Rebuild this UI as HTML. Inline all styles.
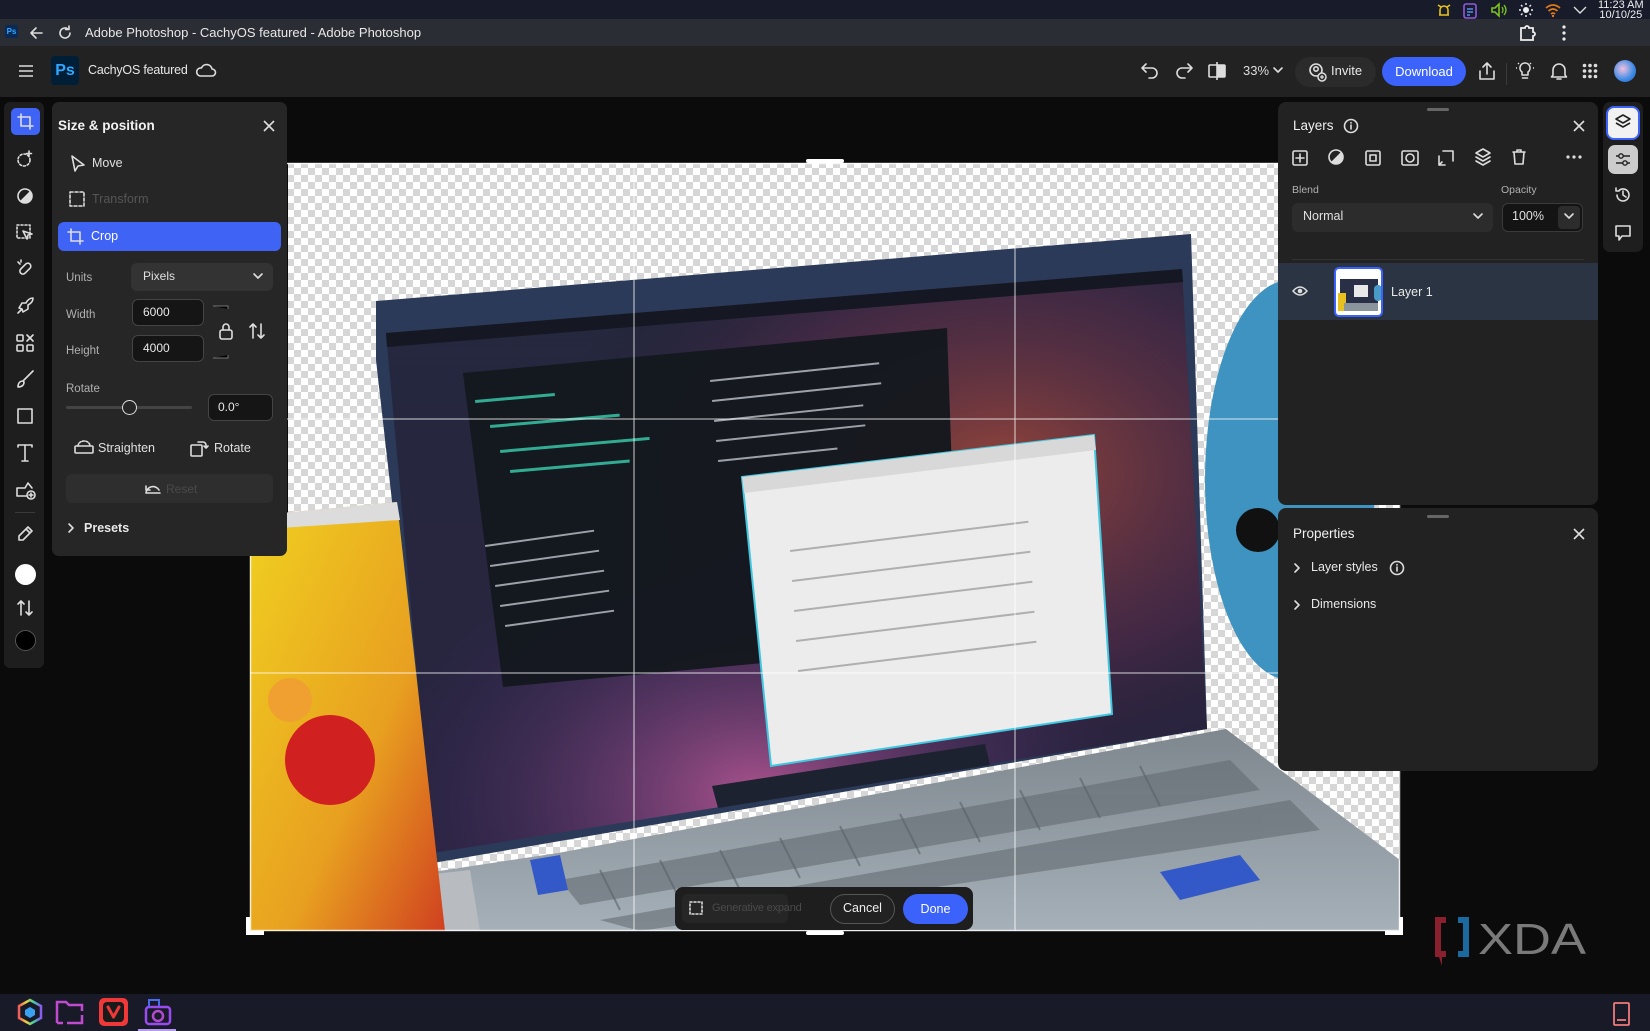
<!DOCTYPE html>
<html><head><meta charset="utf-8">
<style>
*{box-sizing:border-box;margin:0;padding:0}
body{width:1650px;height:1031px;overflow:hidden;background:#0b0b0b;font-family:"Liberation Sans",sans-serif;color:#e8e8e8;position:relative}
.a{position:absolute}
.t{position:absolute;white-space:nowrap}
svg{position:absolute;overflow:visible}
.ic{fill:none;stroke:#ddd;stroke-width:1.6;stroke-linecap:round;stroke-linejoin:round}
.lbl{font-size:11.5px;color:#b0b0b0}
</style></head><body>

<!-- OS bar -->
<div class="a" style="left:0;top:0;width:1650px;height:19px;background:#181b2a"></div>
<svg style="left:1436px;top:2px" width="16" height="16"><path d="M3 13h10M4 13V8a4 4 0 0 1 8 0v5M2 3l3 2M14 3l-3 2" stroke="#e6c21a" stroke-width="1.6" fill="none"/></svg>
<svg style="left:1462px;top:1px" width="16" height="18"><rect x="2" y="3" width="12" height="14" rx="2" stroke="#8f5ae0" stroke-width="1.6" fill="none"/><path d="M5 8h6M5 11h6M5 14h3" stroke="#5a8ef0" stroke-width="1.4"/></svg>
<svg style="left:1490px;top:2px" width="18" height="16"><path d="M2 6h3l4-4v12l-4-4H2z" stroke="#7cc31a" stroke-width="1.6" fill="none"/><path d="M12 5q2 3 0 6M14 3q4 5 0 10" stroke="#7cc31a" stroke-width="1.3" fill="none"/></svg>
<svg style="left:1518px;top:2px" width="16" height="16"><circle cx="8" cy="8" r="3" fill="#eee"/><path d="M8 1v2M8 13v2M1 8h2M13 8h2M3 3l1.5 1.5M11.5 11.5L13 13M3 13l1.5-1.5M11.5 4.5L13 3" stroke="#eee" stroke-width="1.4"/></svg>
<svg style="left:1544px;top:2px" width="18" height="16"><path d="M2 6q7-6 14 0M4.5 9q4.5-4 9 0M7 12q2-2 4 0" stroke="#e07a1c" stroke-width="1.7" fill="none"/><circle cx="9" cy="14" r="1.2" fill="#e07a1c"/></svg>
<svg style="left:1572px;top:4px" width="16" height="12"><path d="M2 3l6 6 6-6" stroke="#ddd" stroke-width="1.4" fill="none"/></svg>
<div class="t" style="left:1598px;top:0px;font-size:11px;line-height:10px;color:#eee;text-align:center">11:23 AM<br>10/10/25</div>

<!-- Browser bar -->
<div class="a" style="left:0;top:19px;width:1650px;height:27px;background:#2a2d33"></div>
<div class="a" style="left:5px;top:25px;width:13px;height:13px;background:#0a2a56;border-radius:2px;color:#31a8ff;font-size:8px;font-weight:bold;text-align:center;line-height:13px">Ps</div>
<svg style="left:29px;top:25px" width="16" height="16"><path d="M13 8H3M7 3L2 8l5 5" class="ic" stroke="#eee"/></svg>
<svg style="left:57px;top:25px" width="16" height="16"><path d="M13 8a5 5 0 1 1-2-4M12 1v3.5H8.5" class="ic" stroke="#eee"/></svg>
<div class="t" style="left:85px;top:25px;font-size:13px;color:#e8e8e8">Adobe Photoshop - CachyOS featured - Adobe Photoshop</div>
<svg style="left:1518px;top:24px" width="18" height="18"><path d="M3 4h4a2 2 0 0 1 4 0h4v4a2 2 0 0 1 0 4v4H3z" stroke="#eee" stroke-width="1.8" fill="none"/></svg>
<svg style="left:1560px;top:24px" width="8" height="18"><circle cx="4" cy="3" r="1.6" fill="#eee"/><circle cx="4" cy="9" r="1.6" fill="#eee"/><circle cx="4" cy="15" r="1.6" fill="#eee"/></svg>

<!-- App header -->
<div class="a" style="left:0;top:46px;width:1650px;height:51px;background:#222222"></div>
<svg style="left:18px;top:64px" width="16" height="14"><path d="M1 2h14M1 7h14M1 12h14" stroke="#ddd" stroke-width="1.6"/></svg>
<div class="a" style="left:51px;top:56px;width:28px;height:29px;background:#001e36;border-radius:4px;color:#31a8ff;font-size:16px;font-weight:bold;text-align:center;line-height:29px">Ps</div>
<div class="t" style="left:88px;top:63px;font-size:12.5px;color:#e8e8e8;letter-spacing:-0.2px">CachyOS featured</div>
<svg style="left:195px;top:62px" width="22" height="16"><path d="M5 14h12a3.5 3.5 0 0 0 0-7 5.5 5.5 0 0 0-10.5-1A4 4 0 0 0 5 14z" class="ic" stroke="#eee"/></svg>

<svg style="left:1140px;top:61px" width="20" height="18"><path d="M6 3L2 7l4 4M2 7h10a5 5 0 0 1 0 10H9" class="ic" stroke="#666"/></svg>
<svg style="left:1174px;top:61px" width="20" height="18"><path d="M14 3l4 4-4 4M18 7H8a5 5 0 0 0 0 10h3" class="ic" stroke="#666"/></svg>
<svg style="left:1207px;top:61px" width="20" height="20"><rect x="2" y="4" width="16" height="12" rx="1" class="ic" stroke="#ddd"/><path d="M10 1v18" stroke="#ddd" stroke-width="1.6"/><rect x="10" y="4" width="8" height="12" fill="#ddd"/></svg>
<div class="t" style="left:1243px;top:63px;font-size:13px;color:#ddd">33%</div>
<svg style="left:1272px;top:66px" width="12" height="10"><path d="M2 2l4 4 4-4" class="ic" stroke="#ddd"/></svg>
<div class="a" style="left:1295px;top:57px;width:81px;height:30px;background:#2b2b2b;border-radius:15px"></div>
<svg style="left:1307px;top:62px" width="22" height="22"><circle cx="9" cy="8" r="6" class="ic" stroke="#ddd"/><circle cx="9" cy="7" r="2.2" class="ic" stroke="#ddd"/><circle cx="15" cy="15" r="4" fill="#2b2b2b" stroke="#ddd" stroke-width="1.5"/><path d="M15 13v4M13 15h4" stroke="#ddd" stroke-width="1.3"/></svg>
<div class="t" style="left:1331px;top:63px;font-size:13px;color:#e8e8e8">Invite</div>
<div class="a" style="left:1382px;top:57px;width:84px;height:29px;background:#3b63fb;border-radius:15px;color:#fff;font-size:13px;text-align:center;line-height:29px">Download</div>
<svg style="left:1477px;top:61px" width="20" height="20"><path d="M10 13V2M6 6l4-4 4 4M3 10v8h14v-8" class="ic" stroke="#ddd"/></svg>
<div class="a" style="left:1506px;top:63px;width:1px;height:22px;background:#3a3a3a"></div>
<svg style="left:1515px;top:60px" width="20" height="22"><path d="M7 15h6M7.5 18h5M10 3a5 5 0 0 0-3 9v3h6v-3a5 5 0 0 0-3-9z" class="ic" stroke="#ddd"/><path d="M1 8h1M18 8h1M3 3l1 1M16 3l-1 1" stroke="#ddd" stroke-width="1.4"/></svg>
<svg style="left:1549px;top:61px" width="20" height="20"><path d="M4 14V9a6 6 0 0 1 12 0v5l1.5 2h-15zM8 18h4" class="ic" stroke="#ddd"/></svg>
<svg style="left:1582px;top:63px" width="16" height="16" fill="#ddd"><circle cx="2.5" cy="2.5" r="1.8"/><circle cx="8" cy="2.5" r="1.8"/><circle cx="13.5" cy="2.5" r="1.8"/><circle cx="2.5" cy="8" r="1.8"/><circle cx="8" cy="8" r="1.8"/><circle cx="13.5" cy="8" r="1.8"/><circle cx="2.5" cy="13.5" r="1.8"/><circle cx="8" cy="13.5" r="1.8"/><circle cx="13.5" cy="13.5" r="1.8"/></svg>
<div class="a" style="left:1614px;top:60px;width:22px;height:22px;border-radius:50%;background:radial-gradient(circle at 40% 40%,#f2c1e0,#3a8ae6 60%,#2a5ac0)"></div>

<!-- Canvas / photo -->
<svg style="left:0;top:0" width="1650" height="1031">
<defs>
<pattern id="ck" width="14" height="14" patternUnits="userSpaceOnUse"><rect width="14" height="14" fill="#fff"/><rect width="7" height="7" fill="#d6d6d6"/><rect x="7" y="7" width="7" height="7" fill="#d6d6d6"/></pattern>
<linearGradient id="neb0" x1="0" y1="0" x2="0" y2="1"><stop offset="0" stop-color="#24283d"/><stop offset="1" stop-color="#2a2440"/></linearGradient>
<radialGradient id="neb1" cx="0.75" cy="0.35" r="0.55"><stop offset="0" stop-color="#a04838" stop-opacity="0.9"/><stop offset="0.6" stop-color="#5a2a4a" stop-opacity="0.5"/><stop offset="1" stop-color="#1c1a2e" stop-opacity="0"/></radialGradient>
<radialGradient id="neb2" cx="0.45" cy="0.9" r="0.45"><stop offset="0" stop-color="#c05a9a" stop-opacity="0.85"/><stop offset="1" stop-color="#3a2a6a" stop-opacity="0"/></radialGradient>
<linearGradient id="yel" x1="0" y1="0" x2="1" y2="1"><stop offset="0" stop-color="#f0d020"/><stop offset="0.6" stop-color="#e8a020"/><stop offset="1" stop-color="#d04020"/></linearGradient>
<linearGradient id="kb" x1="0" y1="0" x2="0" y2="1"><stop offset="0" stop-color="#7e878e"/><stop offset="1" stop-color="#a6b0b8"/></linearGradient>
</defs>
<rect x="288" y="163" width="1111" height="768" fill="url(#ck)"/>
<ellipse cx="1290" cy="480" rx="85" ry="200" fill="#3f93c0"/>
<circle cx="1258" cy="530" r="22" fill="#111"/>
<polygon points="376,301 1191,234 1207,729 433,863 376,360" fill="#2b3a58"/>
<polygon points="386,333 1182,269 1207,729 433,853" fill="url(#neb0)"/>
<polygon points="386,333 1182,269 1207,729 433,853" fill="url(#neb1)"/>
<polygon points="386,333 1182,269 1207,729 433,853" fill="url(#neb2)"/>
<polygon points="386,333 1182,269 1183,282 387,347" fill="#151823"/>
<polygon points="463,373 947,328 958,645 503,687" fill="#14181e" opacity="0.96"/>
<g fill="#3ad0b0" opacity="0.8"><rect x="475" y="400" width="80" height="3" transform="rotate(-5 475 400)"/><rect x="490" y="425" width="130" height="3" transform="rotate(-5 490 425)"/><rect x="500" y="450" width="150" height="3" transform="rotate(-5 500 450)"/><rect x="510" y="470" width="120" height="3" transform="rotate(-5 510 470)"/></g>
<g fill="#d8dde6" opacity="0.7"><rect x="485" y="545" width="110" height="2" transform="rotate(-8 485 545)"/><rect x="490" y="565" width="110" height="2" transform="rotate(-8 490 565)"/><rect x="495" y="585" width="110" height="2" transform="rotate(-8 495 585)"/><rect x="500" y="605" width="110" height="2" transform="rotate(-8 500 605)"/><rect x="505" y="625" width="110" height="2" transform="rotate(-8 505 625)"/><rect x="710" y="380" width="170" height="2" transform="rotate(-6 710 380)"/><rect x="712" y="400" width="170" height="2" transform="rotate(-6 712 400)"/><rect x="714" y="420" width="150" height="2" transform="rotate(-6 714 420)"/><rect x="716" y="440" width="150" height="2" transform="rotate(-6 716 440)"/><rect x="718" y="460" width="120" height="2" transform="rotate(-6 718 460)"/></g>
<polygon points="742,477 1094,435 1112,714 771,766" fill="#ececec" stroke="#40c8e0" stroke-width="2"/>
<polygon points="742,477 1094,435 1096,450 744,493" fill="#d8d8d8"/>
<g fill="#888" opacity="0.6"><rect x="790" y="550" width="240" height="2" transform="rotate(-7 790 550)"/><rect x="792" y="580" width="240" height="2" transform="rotate(-7 792 580)"/><rect x="794" y="610" width="240" height="2" transform="rotate(-7 794 610)"/><rect x="796" y="640" width="240" height="2" transform="rotate(-7 796 640)"/><rect x="798" y="670" width="240" height="2" transform="rotate(-7 798 670)"/></g>
<polygon points="712,786 985,744 990,765 718,808" fill="#1c2230"/>
<polygon points="380,880 558,853 1226,729 1400,860 1400,931 380,931" fill="url(#kb)"/>
<g fill="#5f676e" opacity="0.55"><polygon points="560,880 1230,760 1260,790 580,905"/><polygon points="600,920 1290,800 1320,830 640,931"/></g>
<g stroke="#5a6269" stroke-width="2" opacity="0.6"><path d="M600 870l20 40M660 860l20 40M720 850l20 40M780 838l20 40M840 826l20 40M900 814l20 40M960 802l20 40M1020 790l20 40M1080 778l20 40M1140 766l20 40"/></g>
<polygon points="1160,872 1240,855 1260,880 1180,900" fill="#3358c8"/>
<polygon points="530,860 560,855 568,890 538,895" fill="#3358c8"/>
<polygon points="380,880 470,870 480,931 380,931" fill="#b8bcc0"/>
<polygon points="250,516 397,502 445,931 250,931" fill="url(#yel)"/>
<polygon points="250,516 397,502 400,520 250,530" fill="#dcdcdc"/>
<circle cx="330" cy="760" r="45" fill="#d02020"/>
<circle cx="290" cy="700" r="22" fill="#f0a030"/>
<g stroke="#fff" stroke-opacity="0.8" stroke-width="1"><path d="M634 163V931M1015 163V931M250 419H1399M250 673H1399"/><rect x="250.5" y="163.5" width="1149" height="767" fill="none" stroke-width="1.5"/></g>
<g fill="#fff"><rect x="246" y="917" width="4" height="18"/><rect x="246" y="931" width="18" height="4"/><rect x="1399" y="917" width="4" height="18"/><rect x="1385" y="931" width="18" height="4"/><rect x="806" y="159" width="38" height="4" rx="2"/><rect x="806" y="931" width="38" height="4" rx="2"/></g>
</svg>

<!-- left toolbar -->
<div class="a" style="left:4px;top:102px;width:40px;height:566px;background:#1e1e1e;border-radius:6px"></div>
<div class="a" style="left:11px;top:108px;width:29px;height:27px;background:#3e63f5;border-radius:5px"></div>
<svg style="left:17px;top:113px" width="18" height="18"><path d="M4 1v12h12M1 4h12v12" class="ic" stroke="#fff"/></svg>
<svg style="left:15px;top:149px" width="20" height="20"><circle cx="9" cy="11" r="6" class="ic" stroke-dasharray="2 2"/><path d="M14 2v5M11.5 4.5h5" class="ic"/></svg>
<svg style="left:15px;top:186px" width="20" height="20"><circle cx="10" cy="10" r="7" class="ic"/><path d="M5 15L15 5A7 7 0 0 1 5 15z" fill="#ddd"/></svg>
<svg style="left:15px;top:223px" width="20" height="20"><rect x="2" y="2" width="13" height="13" class="ic" stroke-dasharray="2 2"/><path d="M8 8l9 3-4 1-1 4z" class="ic"/></svg>
<svg style="left:15px;top:259px" width="20" height="20"><rect x="4" y="7" width="13" height="6" rx="3" transform="rotate(-45 10 10)" class="ic"/><path d="M3 3l2 2M6 1v2" class="ic"/></svg>
<svg style="left:15px;top:296px" width="20" height="20"><path d="M7 13l-3-1 3-5 4 0c2-4 5-5 7-5 0 2-1 5-5 7v4l-5 3-1-3zM3 17l3-3" class="ic"/></svg>
<svg style="left:15px;top:333px" width="20" height="20"><rect x="2" y="2" width="6" height="6" rx="1" class="ic"/><rect x="12" y="12" width="6" height="6" rx="1" class="ic"/><rect x="2" y="12" width="6" height="6" rx="1" class="ic"/><path d="M12 2l6 6M18 2l-6 6" class="ic"/></svg>
<svg style="left:15px;top:369px" width="20" height="20"><path d="M18 2L8 12M3 18c0-4 2-6 5-6l1 1c0 3-2 5-6 5z" class="ic"/></svg>
<svg style="left:15px;top:406px" width="20" height="20"><rect x="3" y="3" width="14" height="14" class="ic"/></svg>
<svg style="left:15px;top:443px" width="20" height="20"><path d="M3 4V2h14v2M10 2v16M7 18h6" class="ic"/></svg>
<svg style="left:15px;top:480px" width="22" height="20"><path d="M2 16V8h8l3-5 4 5M2 16h9" class="ic"/><circle cx="16" cy="15" r="4" class="ic"/><path d="M16 13v4M14 15h4" class="ic"/></svg>
<div class="a" style="left:15px;top:512px;width:20px;height:1px;background:#3a3a3a"></div>
<svg style="left:15px;top:524px" width="20" height="20"><path d="M13 3l4 4-9 9H4v-4zM11 5l4 4" class="ic"/></svg>
<div class="a" style="left:15px;top:564px;width:21px;height:21px;border-radius:50%;background:#fff"></div>
<svg style="left:15px;top:598px" width="20" height="20"><path d="M6 17V3M3 6l3-3 3 3M14 3v14M11 14l3 3 3-3" class="ic"/></svg>
<div class="a" style="left:15px;top:630px;width:21px;height:21px;border-radius:50%;background:#000;border:1.5px solid #555"></div>

<!-- Size panel -->
<div class="a" style="left:52px;top:102px;width:235px;height:454px;background:#262626;border-radius:7px"></div>
<div class="t" style="left:58px;top:118px;font-size:13.5px;font-weight:bold;color:#f2f2f2">Size &amp; position</div>
<svg style="left:263px;top:120px" width="12" height="12"><path d="M1 1l10 10M11 1L1 11" stroke="#ddd" stroke-width="1.6"/></svg>
<svg style="left:70px;top:154px" width="16" height="18"><path d="M2 2l12 9-6 1-3 5z" class="ic"/></svg>
<div class="t" style="left:92px;top:156px;font-size:12.5px;color:#e0e0e0">Move</div>
<svg style="left:68px;top:190px" width="18" height="18"><rect x="2" y="2" width="14" height="14" class="ic" stroke="#555" stroke-dasharray="3 2"/></svg>
<div class="t" style="left:92px;top:192px;font-size:12.5px;color:#555">Transform</div>
<div class="a" style="left:58px;top:222px;width:223px;height:29px;background:#3e63f5;border-radius:6px"></div>
<svg style="left:67px;top:228px" width="18" height="18"><path d="M4 1v12h12M1 4h12v12" class="ic" stroke="#fff"/></svg>
<div class="t" style="left:91px;top:229px;font-size:12.5px;color:#fff">Crop</div>
<div class="t lbl" style="left:66px;top:272px">Units</div>
<div class="a" style="left:131px;top:263px;width:142px;height:28px;background:#333;border-radius:6px"></div>
<div class="t" style="left:143px;top:269px;font-size:12px;color:#e0e0e0">Pixels</div>
<svg style="left:252px;top:272px" width="12" height="10"><path d="M2 2l4 4 4-4" class="ic"/></svg>
<div class="t lbl" style="left:66px;top:309px">Width</div>
<div class="a" style="left:132px;top:299px;width:72px;height:27px;background:#151515;border:1.5px solid #444;border-radius:6px"></div>
<div class="t" style="left:143px;top:305px;font-size:12px;color:#e8e8e8">6000</div>
<div class="t lbl" style="left:66px;top:345px">Height</div>
<div class="a" style="left:132px;top:335px;width:72px;height:27px;background:#151515;border:1.5px solid #444;border-radius:6px"></div>
<div class="t" style="left:143px;top:341px;font-size:12px;color:#e8e8e8">4000</div>
<svg style="left:212px;top:304px" width="20" height="56"><path d="M1 2h15v3M1 54h15v-3" stroke="#777" stroke-width="1"/></svg>
<svg style="left:218px;top:322px" width="16" height="18"><rect x="2" y="8" width="12" height="9" rx="2" class="ic"/><path d="M5 8V5a3 3 0 0 1 6 0v3" class="ic"/></svg>
<svg style="left:248px;top:322px" width="18" height="18"><path d="M5 16V2M2 5l3-3 3 3M13 2v14M10 13l3 3 3-3" class="ic"/></svg>
<div class="t lbl" style="left:66px;top:383px">Rotate</div>
<div class="a" style="left:66px;top:406px;width:126px;height:3px;background:#444;border-radius:2px"></div>
<div class="a" style="left:122px;top:400px;width:15px;height:15px;border-radius:50%;background:#262626;border:1.5px solid #ddd"></div>
<div class="a" style="left:208px;top:394px;width:65px;height:27px;background:#151515;border:1.5px solid #444;border-radius:6px"></div>
<div class="t" style="left:218px;top:400px;font-size:12px;color:#e8e8e8">0.0°</div>
<svg style="left:74px;top:440px" width="20" height="16"><rect x="1" y="6" width="18" height="7" rx="1" class="ic"/><path d="M4 6a6 5 0 0 1 12 0" class="ic" stroke-dasharray="2 1.5"/></svg>
<div class="t" style="left:98px;top:441px;font-size:12.5px;color:#e0e0e0">Straighten</div>
<svg style="left:190px;top:439px" width="20" height="18"><rect x="1" y="6" width="11" height="11" rx="1" class="ic"/><path d="M8 3h5a3 3 0 0 1 3 3v3M14 7l2 2 2-2" class="ic"/></svg>
<div class="t" style="left:214px;top:441px;font-size:12.5px;color:#e0e0e0">Rotate</div>
<div class="a" style="left:66px;top:474px;width:207px;height:29px;background:#2e2e2e;border-radius:6px"></div>
<svg style="left:143px;top:481px" width="20" height="14"><path d="M3 12h14M3 12a7 7 0 0 1 13-3M3 5v4h4" class="ic" stroke="#4a4a4a"/></svg>
<div class="t" style="left:166px;top:482px;font-size:12px;color:#4a4a4a">Reset</div>
<svg style="left:66px;top:522px" width="10" height="12"><path d="M3 2l4 4-4 4" class="ic"/></svg>
<div class="t" style="left:84px;top:521px;font-size:12.5px;font-weight:bold;color:#e8e8e8">Presets</div>

<!-- Layers panel -->
<div class="a" style="left:1278px;top:102px;width:320px;height:403px;background:#222;border-radius:8px"></div>
<div class="a" style="left:1427px;top:108px;width:22px;height:3px;background:#666;border-radius:2px"></div>
<div class="t" style="left:1293px;top:118px;font-size:13.5px;color:#f0f0f0">Layers</div>
<svg style="left:1343px;top:118px" width="16" height="16"><circle cx="8" cy="8" r="6.5" class="ic" stroke-width="1.3"/><path d="M8 7v4M8 4.6v.4" class="ic" stroke-width="1.4"/></svg>
<svg style="left:1573px;top:120px" width="12" height="12"><path d="M1 1l10 10M11 1L1 11" stroke="#ddd" stroke-width="1.6"/></svg>
<svg style="left:1291px;top:149px" width="18" height="18"><rect x="2" y="2" width="14" height="14" rx="1.5" class="ic"/><path d="M9 5v8M5 9h8" class="ic"/></svg>
<svg style="left:1327px;top:148px" width="18" height="18"><circle cx="9" cy="9" r="7" class="ic"/><path d="M4 14L14 4A7 7 0 0 1 4 14z" fill="#ddd"/></svg>
<svg style="left:1364px;top:149px" width="18" height="18"><rect x="2" y="2" width="14" height="14" rx="1.5" class="ic" stroke="#555"/><rect x="6" y="6" width="6" height="6" class="ic" stroke="#555"/></svg>
<svg style="left:1400px;top:149px" width="20" height="18"><rect x="2" y="2" width="16" height="14" rx="1.5" class="ic"/><circle cx="10" cy="9" r="4" class="ic"/></svg>
<svg style="left:1437px;top:149px" width="18" height="18"><path d="M6 2h10v10M2 7v9h6M5 13l-3 3" class="ic" stroke="#555"/></svg>
<svg style="left:1474px;top:147px" width="18" height="20"><path d="M9 2l7 4-7 4-7-4zM2 10l7 4 7-4M2 14l7 4 7-4" class="ic"/></svg>
<svg style="left:1511px;top:148px" width="16" height="18"><path d="M2 4h12M6 4V2h4v2M3 4l1 12h8l1-12" class="ic" stroke="#555"/></svg>
<svg style="left:1566px;top:155px" width="16" height="4" fill="#ddd"><circle cx="2" cy="2" r="1.6"/><circle cx="8" cy="2" r="1.6"/><circle cx="14" cy="2" r="1.6"/></svg>
<div class="t lbl" style="left:1292px;top:184px;font-size:10.5px">Blend</div>
<div class="t lbl" style="left:1501px;top:184px;font-size:10.5px">Opacity</div>
<div class="a" style="left:1292px;top:203px;width:201px;height:29px;background:#2c2c2c;border-radius:6px"></div>
<div class="t" style="left:1303px;top:209px;font-size:12.5px;color:#e0e0e0">Normal</div>
<svg style="left:1472px;top:212px" width="12" height="10"><path d="M2 2l4 4 4-4" class="ic"/></svg>
<div class="a" style="left:1502px;top:203px;width:81px;height:29px;background:#141414;border:1.5px solid #3a3a3a;border-radius:6px"></div>
<div class="a" style="left:1558px;top:206px;width:22px;height:23px;background:#2c2c2c;border-radius:4px"></div>
<div class="t" style="left:1512px;top:209px;font-size:12.5px;color:#e0e0e0">100%</div>
<svg style="left:1563px;top:212px" width="12" height="10"><path d="M2 2l4 4 4-4" class="ic"/></svg>
<div class="a" style="left:1292px;top:259px;width:292px;height:1px;background:#333"></div>
<div class="a" style="left:1278px;top:263px;width:320px;height:57px;background:#2a3442"></div>
<svg style="left:1292px;top:284px" width="16" height="14"><path d="M1 7q7-8 14 0q-7 8-14 0z" class="ic"/><circle cx="8" cy="7" r="2.3" fill="#ddd"/></svg>
<div class="a" style="left:1334px;top:267px;width:49px;height:50px;border:2px solid #3b63fb;border-radius:5px;background:#fff;overflow:hidden">
<div class="a" style="left:4px;top:10px;width:38px;height:24px;background:#2a2f48"></div>
<div class="a" style="left:18px;top:16px;width:14px;height:12px;background:#e8e8e8"></div>
<div class="a" style="left:2px;top:24px;width:8px;height:18px;background:#e8c020"></div>
<div class="a" style="left:38px;top:16px;width:8px;height:16px;background:#4a9cc8;border-radius:4px"></div>
<div class="a" style="left:8px;top:34px;width:34px;height:8px;background:#8a949c"></div>
</div>
<div class="t" style="left:1391px;top:285px;font-size:12.5px;color:#e8e8e8">Layer 1</div>

<!-- Properties panel -->
<div class="a" style="left:1278px;top:508px;width:320px;height:263px;background:#222;border-radius:8px"></div>
<div class="a" style="left:1427px;top:515px;width:22px;height:3px;background:#666;border-radius:2px"></div>
<div class="t" style="left:1293px;top:526px;font-size:13.5px;color:#f0f0f0">Properties</div>
<svg style="left:1573px;top:528px" width="12" height="12"><path d="M1 1l10 10M11 1L1 11" stroke="#ddd" stroke-width="1.6"/></svg>
<svg style="left:1292px;top:562px" width="10" height="12"><path d="M3 2l4 4-4 4" class="ic"/></svg>
<div class="t" style="left:1311px;top:560px;font-size:12.5px;color:#e8e8e8">Layer styles</div>
<svg style="left:1389px;top:560px" width="16" height="16"><circle cx="8" cy="8" r="6.5" class="ic" stroke-width="1.3"/><path d="M8 7v4M8 4.6v.4" class="ic" stroke-width="1.4"/></svg>
<svg style="left:1292px;top:599px" width="10" height="12"><path d="M3 2l4 4-4 4" class="ic"/></svg>
<div class="t" style="left:1311px;top:597px;font-size:12.5px;color:#e8e8e8">Dimensions</div>

<!-- right rail -->
<div class="a" style="left:1603px;top:102px;width:40px;height:150px;background:#1e1e1e;border-radius:7px"></div>
<div class="a" style="left:1606px;top:106px;width:34px;height:34px;background:#f2f2f2;border:2px solid #3b63fb;border-radius:8px"></div>
<svg style="left:1614px;top:113px" width="18" height="20"><path d="M9 2l7 4-7 4-7-4zM2 10l7 4 7-4" fill="none" stroke="#222" stroke-width="1.6" stroke-linejoin="round"/></svg>
<div class="a" style="left:1608px;top:145px;width:30px;height:29px;background:#ccc;border-radius:7px"></div>
<svg style="left:1614px;top:151px" width="18" height="18"><path d="M2 5h14M2 12h14" stroke="#222" stroke-width="1.4"/><circle cx="7" cy="5" r="2.2" fill="#ccc" stroke="#222" stroke-width="1.4"/><circle cx="11" cy="12" r="2.2" fill="#ccc" stroke="#222" stroke-width="1.4"/></svg>
<svg style="left:1614px;top:186px" width="18" height="18"><path d="M3 9a6 6 0 1 0 2-4.5M2 2v3h3M9 5v4l3 2" class="ic"/></svg>
<svg style="left:1614px;top:224px" width="18" height="18"><path d="M2 2h14v10H8l-3 4v-4H2z" class="ic"/></svg>

<!-- bottom crop bar -->
<div class="a" style="left:675px;top:887px;width:298px;height:43px;background:#1e1e1e;border-radius:8px"></div>
<div class="a" style="left:682px;top:894px;width:106px;height:29px;background:#262626;border-radius:6px"></div>
<svg style="left:688px;top:900px" width="16" height="16"><rect x="2" y="2" width="12" height="12" class="ic" stroke="#444" stroke-dasharray="2 2"/></svg>
<div class="t" style="left:712px;top:902px;font-size:11px;color:#4a4a4a;letter-spacing:-0.2px">Generative expand</div>
<div class="a" style="left:830px;top:894px;width:65px;height:30px;border:1.5px solid #555;border-radius:15px;background:#222;color:#eee;font-size:12.5px;text-align:center;line-height:27px">Cancel</div>
<div class="a" style="left:903px;top:894px;width:65px;height:30px;border-radius:15px;background:#3b63fb;color:#fff;font-size:12.5px;text-align:center;line-height:30px">Done</div>

<!-- XDA -->
<svg style="left:1434px;top:918px" width="160" height="50">
<path d="M12 2H4v34h8" stroke="#8a1f2e" stroke-width="6" fill="none"/><path d="M4 36l4 12V36" fill="#8a1f2e"/>
<path d="M24 2h8v34h-8" stroke="#1a6aa0" stroke-width="6" fill="none"/>
<text x="44" y="36" font-family="Liberation Sans" font-size="44" fill="#7a7a7a" textLength="108" lengthAdjust="spacingAndGlyphs">XDA</text>
</svg>

<!-- taskbar -->
<div class="a" style="left:0;top:994px;width:1650px;height:37px;background:#181a27"></div>
<svg style="left:16px;top:998px" width="28" height="28"><defs><linearGradient id="rb"><stop offset="0" stop-color="#f05a5a"/><stop offset=".33" stop-color="#f0d040"/><stop offset=".66" stop-color="#40d0a0"/><stop offset="1" stop-color="#8a5af0"/></linearGradient></defs><path d="M14 2l11 6v12l-11 6-11-6V8z" fill="none" stroke="url(#rb)" stroke-width="2.5"/><path d="M14 9l5 3v5l-5 3-5-3v-5z" fill="#3aa0f0"/></svg>
<svg style="left:55px;top:999px" width="30" height="27"><path d="M2 24V3h9l3 3h13v6M2 24h6M12 24h15v-8" fill="none" stroke="#c04ad0" stroke-width="2.5"/></svg>
<div class="a" style="left:99px;top:998px;width:29px;height:28px;border-radius:5px;background:#ef3939"></div>
<div class="a" style="left:103px;top:1002px;width:21px;height:20px;border-radius:4px;background:#1a1a1a"></div>
<svg style="left:105px;top:1004px" width="17" height="16"><path d="M3 3l5.5 10L14 3" fill="none" stroke="#ef3939" stroke-width="3" stroke-linecap="round" stroke-linejoin="round"/></svg>
<svg style="left:143px;top:998px" width="30" height="28"><rect x="3" y="9" width="24" height="17" rx="3" fill="none" stroke="#9a4af0" stroke-width="2.5"/><circle cx="15" cy="18" r="5" fill="none" stroke="#b04ad0" stroke-width="2.5"/><path d="M6 9V2h10v6" fill="none" stroke="#4a6af0" stroke-width="2"/></svg>
<div class="a" style="left:138px;top:1029px;width:38px;height:2px;background:#b49af0"></div>
<svg style="left:1612px;top:1001px" width="20" height="26"><rect x="2" y="2" width="15" height="22" rx="1" fill="none" stroke="#f07a7a" stroke-width="1.8"/><path d="M5 19h9" stroke="#f07a7a" stroke-width="1.8"/></svg>
</body></html>
